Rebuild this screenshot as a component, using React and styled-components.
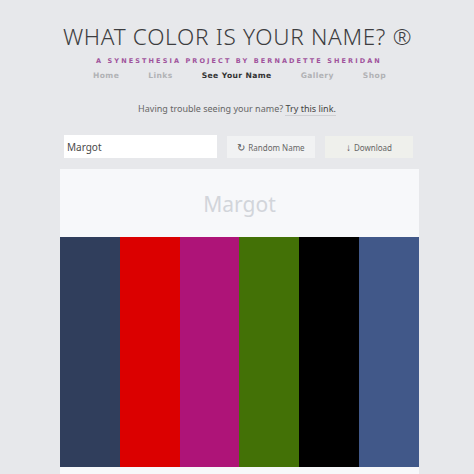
import React from "react";
import styled, { createGlobalStyle } from "styled-components";

const GlobalStyle = createGlobalStyle`
    body {
        margin: 0;
        background: #e7e8eb;
        font-family: "Noto Sans", "Open Sans", sans-serif;
    }
`;

const stripes = ["#303e5c", "#db0000", "#ae1478", "#437106", "#000000", "#415889"];

const App = () => {
    return (
        <React.Fragment>
            <GlobalStyle />
            <Page>
                <Title>WHAT COLOR IS YOUR NAME? ®</Title>
                <Subtitle>A SYNESTHESIA PROJECT BY BERNADETTE SHERIDAN</Subtitle>
                <Nav>
                    <NavItem>Home</NavItem>
                    <NavItem>Links</NavItem>
                    <NavItem active>See Your Name</NavItem>
                    <NavItem>Gallery</NavItem>
                    <NavItem>Shop</NavItem>
                </Nav>
                <Notice>
                    Having trouble seeing your name? <NoticeLink>Try this link.</NoticeLink>
                </Notice>
                <Main>
                    <Form>
                        <NameInput defaultValue="Margot" />
                        <Button>
                            <span>↻</span> Random Name
                        </Button>
                        <Button tone="#eff0ec">
                            <span>↓</span> Download
                        </Button>
                    </Form>
                    <Card>
                        <CardHead>Margot</CardHead>
                        <Stripes>
                            {stripes.map((c) => (
                                <Stripe key={c} color={c} />
                            ))}
                        </Stripes>
                    </Card>
                </Main>
            </Page>
        </React.Fragment>
    );
};

const Page = styled.div`
    display: flex;
    flex-direction: column;
    align-items: center;
    padding-top: 25px;
`;

const Title = styled.h1`
    margin: 0 0 0 1px;
    font-family: "Noto Sans", sans-serif;
    font-weight: 300;
    font-size: 22.5px;
    line-height: 24px;
    letter-spacing: 0.7px;
    color: #3d3d40;
    white-space: nowrap;
`;

const Subtitle = styled.div`
    margin-top: 8px;
    font-family: "DejaVu Sans", sans-serif;
    font-weight: 700;
    font-size: 6.5px;
    letter-spacing: 2.1px;
    color: #a0539c;
    padding-left: 4px;
`;

const Nav = styled.div`
    display: flex;
    gap: 29px;
    margin-top: 6px;
    padding-left: 5px;
`;

const NavItem = styled.span`
    font-family: "DejaVu Sans", sans-serif;
    font-weight: 700;
    font-size: 7.6px;
    letter-spacing: 0.4px;
    color: ${(p) => (p.active ? "#333" : "#b1b2b5")};
`;

const Notice = styled.div`
    margin-top: 22px;
    font-size: 9px;
    color: #666;
`;

const NoticeLink = styled.span`
    color: #444;
    border-bottom: 1px solid #cfd0d3;
`;

const Main = styled.div`
    width: 359px;
    margin-top: 20px;
    margin-left: 5px;
`;

const Form = styled.div`
    display: flex;
    padding: 0 6px 0 4px;
    gap: 10px;
`;

const NameInput = styled.input`
    width: 153px;
    height: 23px;
    box-sizing: border-box;
    border: none;
    background: #fff;
    padding: 0 3px;
    font-family: "Noto Sans", sans-serif;
    font-size: 10px;
    color: #4a4a4a;
    outline: none;
`;

const Button = styled.div`
    flex: 1;
    height: 22px;
    margin-top: 1px;
    display: flex;
    align-items: center;
    justify-content: center;
    gap: 3px;
    background: ${(p) => p.tone || "#f1f2f3"};
    font-family: "Noto Sans", sans-serif;
    font-size: 8px;
    color: #666;
    span {
        font-size: 10px;
        color: #555;
    }
`;

const Card = styled.div`
    margin-top: 11px;
    background: #f7f8fa;
    padding-bottom: 10px;
`;

const CardHead = styled.div`
    height: 68px;
    display: flex;
    align-items: center;
    justify-content: center;
    font-family: "Noto Sans", sans-serif;
    font-size: 21px;
    font-weight: 400;
    color: #d2d5da;
    padding-top: 1px;
    box-sizing: border-box;
`;

const Stripes = styled.div`
    display: grid;
    grid-template-columns: repeat(6, 1fr);
    height: 230px;
`;

const Stripe = styled.div`
    background: ${(p) => p.color};
`;

export default App;
